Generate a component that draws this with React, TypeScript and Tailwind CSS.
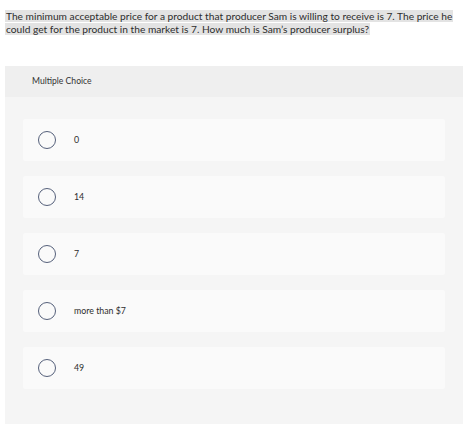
const options = ['0', '14', '7', 'more than $7', '49'];

export default function App() {
  return (
    <div className="w-[474px] h-[436px] bg-white font-['Lato',sans-serif] text-[#2d2d2d]">
      <div className="pl-[5px] pr-[4px] pt-[10px] text-[10.2px] leading-[12.5px] whitespace-nowrap">
        <span className="bg-[#e3e3e3] px-[1px] [box-decoration-break:clone]">
          The minimum acceptable price for a product that producer Sam is willing to receive is 7. The price he
          <br />
          could get for the product in the market is 7. How much is Sam’s producer surplus?
        </span>
      </div>

      <div className="mt-[31px] ml-[5px] w-[458px] h-[358px] bg-[#f5f5f5]">
        <div className="h-[31px] bg-[#efefef] pl-[27px] flex items-center text-[8.6px] text-[#333]">
          Multiple Choice
        </div>
        <div className="px-[18px] pt-[22px] flex flex-col gap-[15px]">
          {options.map((o) => (
            <div key={o} className="h-[42px] bg-[#fafafa] rounded-[2px] flex items-center">
              <div className="ml-[15px] w-[18px] h-[18px] rounded-full border border-[#55607a]" />
              <span className="ml-[18px] text-[8.8px] text-[#2d2d2d]">{o}</span>
            </div>
          ))}
        </div>
      </div>
    </div>
  );
}
